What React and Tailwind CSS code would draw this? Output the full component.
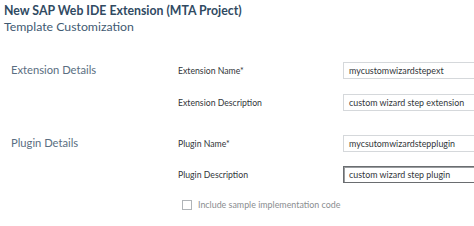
const Field = ({ label, value, focused }) => (
  <div className="flex h-[17px] items-center">
    <div className="w-[165px] shrink-0 text-[8.7px] text-[#32363a]">{label}</div>
    <div
      className={
        'flex h-[17px] w-[180px] shrink-0 items-center bg-white px-[5px] text-[8.9px] text-[#32363a] ' +
        (focused
          ? 'border border-[#6a6d70] shadow-[inset_1px_1px_0_#9a9da0]'
          : 'border border-[#d5d8db]')
      }
    >
      {value}
    </div>
  </div>
);

const App = () => {
  return (
    <div className="h-[226px] w-[474px] overflow-hidden bg-white font-['Lato',sans-serif]">
      <div className="px-[4px] pt-[3px]">
        <h1 className="text-[12.3px] leading-[16px] font-bold text-[#304a62]">
          New SAP Web IDE Extension (MTA Project)
        </h1>
        <h2 className="text-[12.3px] leading-[16px] text-[#3f5a72]">
          Template Customization
        </h2>
      </div>

      <div className="mt-[27px] flex">
        <div className="w-[178px] shrink-0 pl-[11px] text-[11.2px] leading-[16px] text-[#5a6e82]">
          Extension Details
        </div>
        <div className="flex shrink-0 flex-col gap-[15px]">
          <Field label="Extension Name*" value="mycustomwizardstepext" />
          <Field
            label="Extension Description"
            value="custom wizard step extension"
          />
        </div>
      </div>

      <div className="mt-[24px] flex">
        <div className="w-[178px] shrink-0 pl-[11px] text-[11.2px] leading-[16px] text-[#5a6e82]">
          Plugin Details
        </div>
        <div className="flex shrink-0 flex-col">
          <Field label="Plugin Name*" value="mycsutomwizardstepplugin" />
          <div className="mt-[14px]">
            <Field
              label="Plugin Description"
              value="custom wizard step plugin"
              focused
            />
          </div>
          <div className="mt-[16px] flex h-[11px] items-center pl-[4px]">
            <span className="h-[10px] w-[10px] border border-[#b0b4b8] bg-white" />
            <span className="ml-[6px] text-[8.9px] text-[#8a8d90]">
              Include sample implementation code
            </span>
          </div>
        </div>
      </div>
    </div>
  );
};

export default App;
